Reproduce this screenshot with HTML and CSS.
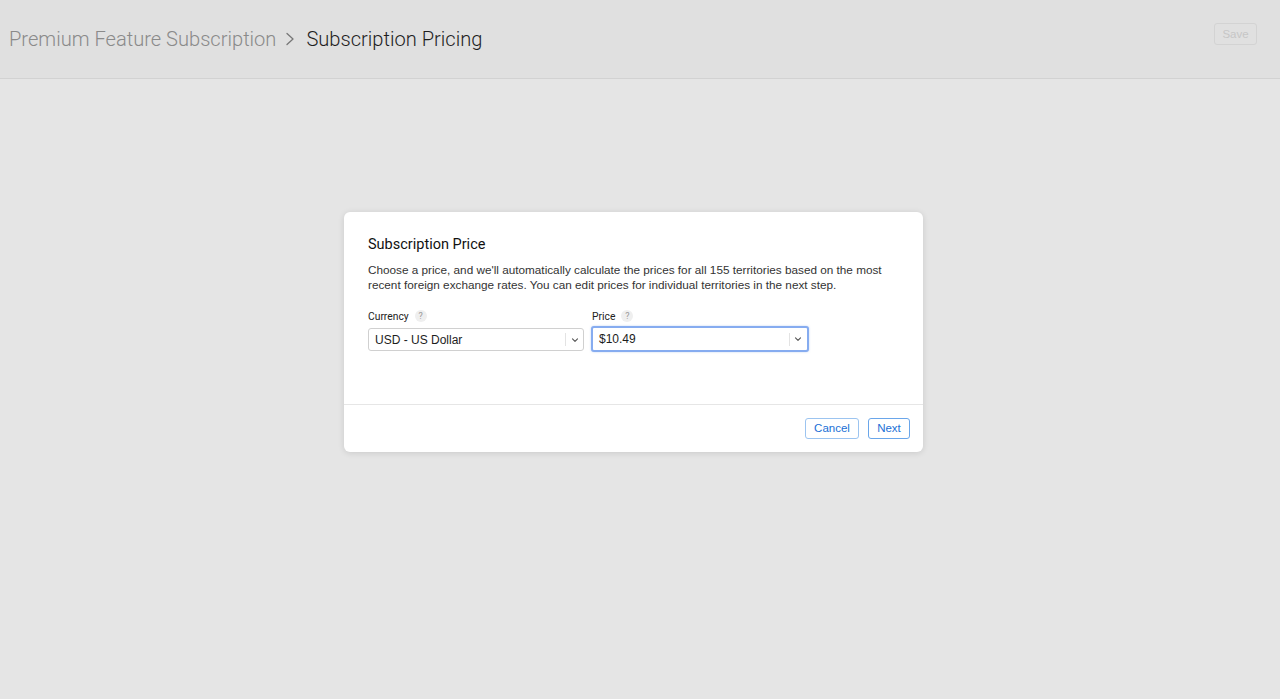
FILE: index.html
```html
<!DOCTYPE html>
<html>
<head>
<meta charset="utf-8">
<link rel="stylesheet" href="styles.css">
</head>
<body>
<header class="topbar">
  <div class="crumbs">
    <span class="crumb-parent">Premium Feature Subscription</span>
    <svg class="crumb-sep" width="12" height="16" viewBox="0 0 12 16"><path d="M3 2.5 L9 8 L3 13.5" fill="none" stroke="#777" stroke-width="1.3" stroke-linecap="round" stroke-linejoin="round"/></svg>
    <span class="crumb-current">Subscription Pricing</span>
  </div>
  <button class="save-btn" disabled>Save</button>
</header>
<main class="stage">
  <section class="modal">
    <div class="modal-body">
      <h2 class="modal-title">Subscription Price</h2>
      <p class="modal-desc">Choose a price, and we'll automatically calculate the prices for all 155 territories based on the most recent foreign exchange rates. You can edit prices for individual territories in the next step.</p>
      <div class="fields">
        <div class="field">
          <div class="label">Currency <span class="help">?</span></div>
          <div class="select">
            <span class="select-value">USD - US Dollar</span>
            <span class="select-arrow"><svg width="8" height="6" viewBox="0 0 8 6"><path d="M1.5 1.8 L4 4.3 L6.5 1.8" fill="none" stroke="#555" stroke-width="1.1" stroke-linecap="round" stroke-linejoin="round"/></svg></span>
          </div>
        </div>
        <div class="field">
          <div class="label">Price <span class="help">?</span></div>
          <div class="select focused">
            <span class="select-value">$10.49</span>
            <span class="select-arrow"><svg width="8" height="6" viewBox="0 0 8 6"><path d="M1.5 1.8 L4 4.3 L6.5 1.8" fill="none" stroke="#555" stroke-width="1.1" stroke-linecap="round" stroke-linejoin="round"/></svg></span>
          </div>
        </div>
      </div>
    </div>
    <div class="modal-footer">
      <button class="btn cancel">Cancel</button>
      <button class="btn next">Next</button>
    </div>
  </section>
</main>
</body>
</html>
```
FILE: styles.css
```css
* { box-sizing: border-box; }
html, body { margin: 0; padding: 0; }
body {
  background: #e5e5e5;
  font-family: "Liberation Sans", Arial, sans-serif;
  color: #222;
  height: 699px;
  overflow: hidden;
}
.topbar {
  height: 79px;
  background: #e0e0e0;
  border-bottom: 1px solid #d2d2d2;
  display: flex;
  align-items: flex-start;
  justify-content: space-between;
}
.crumbs {
  display: flex;
  align-items: center;
  padding-left: 9px;
  height: 79px;
  padding-bottom: 1px;
}
.crumb-parent {
  font-family: "Roboto", "Liberation Sans", sans-serif;
  font-weight: 300;
  font-size: 20.1px;
  color: #8a8a8a;
}
.crumb-sep { margin: 0 10px 0 8px; }
.crumb-current {
  font-family: "Roboto", "Liberation Sans", sans-serif;
  font-weight: 300;
  font-size: 20.1px;
  color: #1e1e1e;
}
.save-btn {
  margin: 23px 23px 0 0;
  width: 43px;
  height: 22px;
  border: 1px solid #d3d3d3;
  border-radius: 3px;
  background: transparent;
  color: #c6c6c6;
  font-family: "Liberation Sans", Arial, sans-serif;
  font-size: 11.5px;
  padding: 0;
}
.stage {
  display: flex;
  justify-content: center;
  padding-top: 133px;
  padding-right: 13px;
}
.modal {
  width: 579px;
  height: 240px;
  background: #fff;
  border-radius: 6px;
  box-shadow: 0 1px 6px rgba(0,0,0,0.12);
  display: flex;
  flex-direction: column;
}
.modal-body {
  padding: 25px 24px 0 24px;
  height: 193px;
  border-bottom: 1px solid #e6e6e6;
}
.modal-title {
  margin: 0;
  font-size: 14.5px;
  font-weight: 400;
  font-family: "Roboto", "Liberation Sans", sans-serif;
  color: #111;
  line-height: 16px;
}
.modal-desc {
  margin: 9px 0 0 0;
  font-size: 11.75px;
  line-height: 15px;
  color: #333;
  width: 530px;
}
.fields {
  display: flex;
  gap: 8px;
  margin-top: 17px;
}
.field { width: 216px; }
.label {
  font-size: 10.3px;
  font-weight: 400;
  font-family: "Roboto", "Liberation Sans", sans-serif;
  color: #222;
  display: flex;
  align-items: center;
  height: 14px;
  margin-bottom: 5px;
}
.help {
  display: inline-flex;
  align-items: center;
  justify-content: center;
  width: 12px;
  height: 12px;
  border-radius: 50%;
  background: #efefef;
  color: #999;
  font-size: 9px;
  margin-left: 6px;
}
.select {
  height: 23px;
  border: 1px solid #d0d0d0;
  border-radius: 3px;
  display: flex;
  align-items: center;
  background: #fff;
}
.select-value {
  flex: 1;
  padding-left: 6px;
  font-size: 12px;
  color: #1d1d1d;
}
.select-arrow {
  width: 18px;
  height: 13px;
  border-left: 1px solid #e3e3e3;
  display: flex;
  align-items: center;
  justify-content: flex-end;
  padding-right: 4px;
}
.select.focused {
  width: 218px;
  height: 26px;
  margin: -2px 0 0 -1px;
  border: 2px solid #86acf0;
  box-shadow: 0 0 2px rgba(120,160,230,0.5);
}
.select.focused .select-value { padding-left: 6px; }
.select.focused .select-arrow { padding-right: 5px; }
.modal-footer {
  flex: 1;
  display: flex;
  justify-content: flex-end;
  align-items: center;
  gap: 9px;
  padding-right: 13px;
  padding-bottom: 1px;
}
.btn {
  height: 21px;
  padding: 0;
  background: #fff;
  border: 1px solid #6aa6ea;
  border-radius: 3px;
  color: #1a6fd6;
  font-size: 11.5px;
  font-family: "Liberation Sans", Arial, sans-serif;
}
.btn.cancel { width: 54px; border-color: #9cc4f0; }
.btn.next { width: 42px; }
```
